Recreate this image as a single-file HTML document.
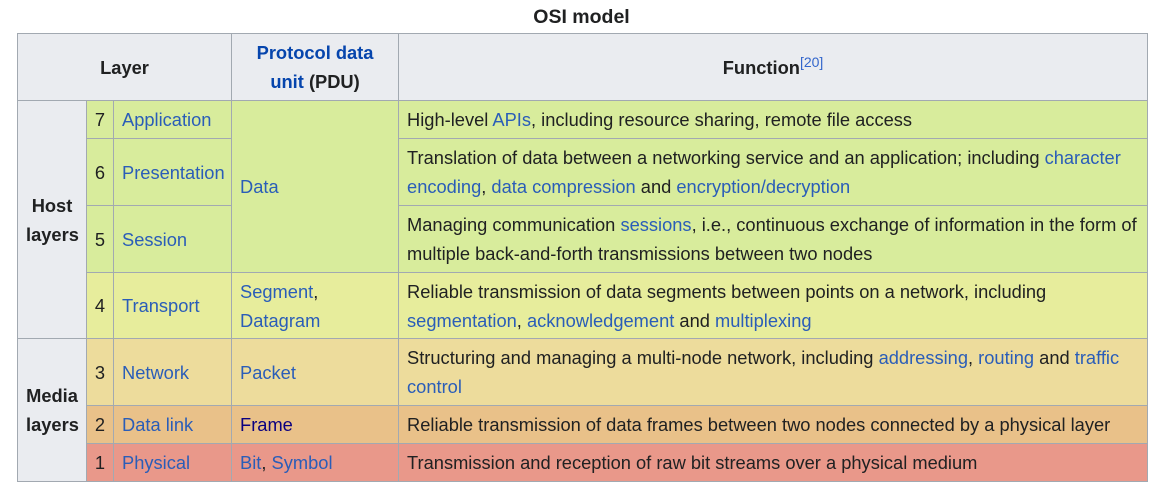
<!DOCTYPE html>
<html><head><meta charset="utf-8"><style>
body{margin:0;background:#fff;font-family:"Liberation Sans",sans-serif;font-size:18.3px;color:#202122;}
.cap{position:absolute;top:6px;left:17px;width:1129px;text-align:center;font-weight:bold;font-size:19.5px;}
table{position:absolute;top:33px;left:17px;border-collapse:collapse;table-layout:fixed;width:1130px;}
td,th{border:1px solid #a2a9b1;padding:0 8px;line-height:29px;vertical-align:middle;text-align:left;}
th{background:#eaecf0;text-align:center;font-weight:bold;}
a{color:#2a5db8;text-decoration:none}
th a{color:#0645ad}
.n{text-align:center;padding:0 4px}
.g{background:#d8ec9c}.t{background:#e7ed9c}.nw{background:#eddc9c}.dl{background:#e9c189}.ph{background:#e9988a}
sup{font-size:14px;font-weight:normal;line-height:0}
</style></head><body>
<div class="cap">OSI model</div>
<table>
<colgroup><col style="width:69px"><col style="width:27px"><col style="width:118px"><col style="width:167px"><col style="width:749px"></colgroup>
<tr style="height:67px"><th colspan="3">Layer</th><th><a>Protocol data unit</a> (PDU)</th><th>Function<sup><a style="color:#3366cc">[20]</a></sup></th></tr>
<tr style="height:38px"><th rowspan="4">Host<br>layers</th><td class="g n">7</td><td class="g"><a>Application</a></td><td class="g" rowspan="3"><a>Data</a></td><td class="g">High-level <a>APIs</a>, including resource sharing, remote file access</td></tr>
<tr style="height:67px"><td class="g n">6</td><td class="g"><a>Presentation</a></td><td class="g">Translation of data between a networking service and an application; including <a>character encoding</a>, <a>data compression</a> and <a>encryption/decryption</a></td></tr>
<tr style="height:67px"><td class="g n">5</td><td class="g"><a>Session</a></td><td class="g">Managing communication <a>sessions</a>, i.e., continuous exchange of information in the form of multiple back-and-forth transmissions between two nodes</td></tr>
<tr style="height:66px"><td class="t n">4</td><td class="t"><a>Transport</a></td><td class="t"><a>Segment</a>, <a>Datagram</a></td><td class="t">Reliable transmission of data segments between points on a network, including <a>segmentation</a>, <a>acknowledgement</a> and <a>multiplexing</a></td></tr>
<tr style="height:67px"><th rowspan="3">Media<br>layers</th><td class="nw n">3</td><td class="nw"><a>Network</a></td><td class="nw"><a>Packet</a></td><td class="nw">Structuring and managing a multi-node network, including <a>addressing</a>, <a>routing</a> and <a>traffic control</a></td></tr>
<tr style="height:38px"><td class="dl n">2</td><td class="dl"><a>Data link</a></td><td class="dl"><a style="color:#0b0080">Frame</a></td><td class="dl">Reliable transmission of data frames between two nodes connected by a physical layer</td></tr>
<tr style="height:38px"><td class="ph n">1</td><td class="ph"><a>Physical</a></td><td class="ph"><a>Bit</a>, <a>Symbol</a></td><td class="ph">Transmission and reception of raw bit streams over a physical medium</td></tr>
</table>
</body></html>
